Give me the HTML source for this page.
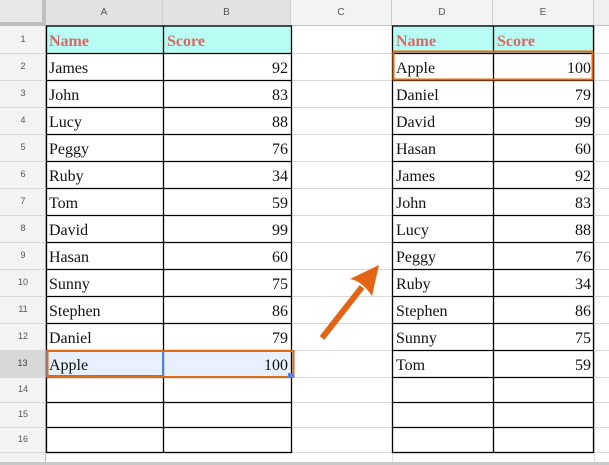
<!DOCTYPE html>
<html><head><style>
body{margin:0;width:609px;height:465px;overflow:hidden;background:#fff;position:relative;font-family:"Liberation Serif",serif;}
.c{position:absolute;box-sizing:border-box;}
.h{background:#f3f3f3;font-family:"Liberation Sans",sans-serif;font-size:10px;color:#555;text-align:center;}
</style></head><body>
<div class="c h" style="left:0;top:0;width:46px;height:26px;background:#e8e8e8;border-right:4px solid #c0c0c0;border-bottom:4px solid #c0c0c0"></div>
<div class="c h" style="left:46px;top:0;width:563px;height:26px;border-bottom:1px solid #c0c0c0;background:#efefef"></div>
<div class="c h" style="left:46px;top:0;width:117px;height:25px;line-height:25px;background:#e2e2e2;border-right:1px solid #ccc">A</div>
<div class="c h" style="left:163px;top:0;width:128px;height:25px;line-height:25px;background:#e2e2e2;border-right:1px solid #ccc">B</div>
<div class="c h" style="left:291px;top:0;width:101px;height:25px;line-height:25px;border-right:1px solid #ccc">C</div>
<div class="c h" style="left:392px;top:0;width:101px;height:25px;line-height:25px;border-right:1px solid #ccc">D</div>
<div class="c h" style="left:493px;top:0;width:101px;height:25px;line-height:25px;border-right:1px solid #ccc">E</div>
<div class="c h" style="left:0;top:26px;width:46px;height:437px;border-right:1px solid #c0c0c0"></div>
<svg class="c" style="left:0;top:0" width="609" height="465">
<g stroke="#d9d9d9" stroke-width="1">
<line x1="0" y1="53.5" x2="609" y2="53.5"/><line x1="0" y1="80.5" x2="609" y2="80.5"/><line x1="0" y1="107.5" x2="609" y2="107.5"/><line x1="0" y1="134.5" x2="609" y2="134.5"/><line x1="0" y1="161.5" x2="609" y2="161.5"/><line x1="0" y1="188.5" x2="609" y2="188.5"/><line x1="0" y1="215.5" x2="609" y2="215.5"/><line x1="0" y1="242.5" x2="609" y2="242.5"/><line x1="0" y1="269.5" x2="609" y2="269.5"/><line x1="0" y1="296.5" x2="609" y2="296.5"/><line x1="0" y1="323.5" x2="609" y2="323.5"/><line x1="0" y1="350.5" x2="609" y2="350.5"/><line x1="0" y1="377.5" x2="609" y2="377.5"/><line x1="0" y1="402.5" x2="609" y2="402.5"/><line x1="0" y1="427.5" x2="609" y2="427.5"/><line x1="0" y1="452.5" x2="609" y2="452.5"/>
<line x1="392.5" y1="26" x2="392.5" y2="463"/><line x1="594.5" y1="26" x2="594.5" y2="463"/>
</g>
<rect x="46" y="26" width="245" height="27" fill="#b7fdf4"/>
<rect x="392" y="26" width="202" height="27" fill="#b7fdf4"/>
<rect x="46" y="350" width="245" height="27" fill="#e8f0fd"/>
<g stroke="#000" stroke-width="1.3" fill="none">
<rect x="46.5" y="26" width="245" height="426.5"/>
<line x1="163.5" y1="26" x2="163.5" y2="452"/>
<line x1="46" y1="53.5" x2="291" y2="53.5"/><line x1="46" y1="80.5" x2="291" y2="80.5"/><line x1="46" y1="107.5" x2="291" y2="107.5"/><line x1="46" y1="134.5" x2="291" y2="134.5"/><line x1="46" y1="161.5" x2="291" y2="161.5"/><line x1="46" y1="188.5" x2="291" y2="188.5"/><line x1="46" y1="215.5" x2="291" y2="215.5"/><line x1="46" y1="242.5" x2="291" y2="242.5"/><line x1="46" y1="269.5" x2="291" y2="269.5"/><line x1="46" y1="296.5" x2="291" y2="296.5"/><line x1="46" y1="323.5" x2="291" y2="323.5"/><line x1="46" y1="350.5" x2="291" y2="350.5"/><line x1="46" y1="377.5" x2="291" y2="377.5"/><line x1="46" y1="402.5" x2="291" y2="402.5"/><line x1="46" y1="427.5" x2="291" y2="427.5"/>
<rect x="392.5" y="26" width="201" height="426.5"/>
<line x1="493.5" y1="26" x2="493.5" y2="452"/>
<line x1="392" y1="53.5" x2="594" y2="53.5"/><line x1="392" y1="80.5" x2="594" y2="80.5"/><line x1="392" y1="107.5" x2="594" y2="107.5"/><line x1="392" y1="134.5" x2="594" y2="134.5"/><line x1="392" y1="161.5" x2="594" y2="161.5"/><line x1="392" y1="188.5" x2="594" y2="188.5"/><line x1="392" y1="215.5" x2="594" y2="215.5"/><line x1="392" y1="242.5" x2="594" y2="242.5"/><line x1="392" y1="269.5" x2="594" y2="269.5"/><line x1="392" y1="296.5" x2="594" y2="296.5"/><line x1="392" y1="323.5" x2="594" y2="323.5"/><line x1="392" y1="350.5" x2="594" y2="350.5"/><line x1="392" y1="377.5" x2="594" y2="377.5"/><line x1="392" y1="402.5" x2="594" y2="402.5"/><line x1="392" y1="427.5" x2="594" y2="427.5"/>
</g>
<rect x="47" y="351" width="116" height="25" fill="none" stroke="#4a86e8" stroke-width="2"/>
<rect x="47.5" y="351" width="246" height="26" fill="none" stroke="#e06a10" stroke-width="2"/>
<rect x="288" y="373" width="5" height="5" fill="#4a86e8"/>
<rect x="393.5" y="51.5" width="199" height="28" fill="none" stroke="#e06a10" stroke-width="2"/>
<line x1="322" y1="338" x2="362" y2="287" stroke="#e36414" stroke-width="6"/>
<path d="M379,265 L350,279 Q362,281 372,296 Z" fill="#e36414"/>
<rect x="0" y="462" width="609" height="3" fill="#c8c8c8"/>
</svg>
<div style="position:absolute;left:0;top:26px;width:46px;font-family:'Liberation Sans',sans-serif;font-size:9px;color:#555;text-align:center;line-height:27px">1<br>2<br>3<br>4<br>5<br>6<br>7<br>8<br>9<br>10<br>11<br>12<br>13</div>
<div style="position:absolute;left:0;top:377px;width:46px;font-family:'Liberation Sans',sans-serif;font-size:9px;color:#555;text-align:center;line-height:25px">14<br>15<br>16</div>
<div class="c" style="left:0;top:350px;width:45px;height:27px;background:#d8d8d8;font-family:'Liberation Sans',sans-serif;font-size:9px;color:#444;text-align:center;line-height:27px">13</div>
<div style="position:absolute;left:49px;top:28px;font-size:16px;line-height:27px;color:#111">
<b style="color:#e06666">Name</b><br>James<br>John<br>Lucy<br>Peggy<br>Ruby<br>Tom<br>David<br>Hasan<br>Sunny<br>Stephen<br>Daniel<br>Apple</div>
<div style="position:absolute;left:167px;top:28px;font-size:16px;line-height:27px;color:#e06666"><b>Score</b></div>
<div style="position:absolute;left:163px;width:125px;top:55px;font-size:16px;line-height:27px;color:#111;text-align:right">92<br>83<br>88<br>76<br>34<br>59<br>99<br>60<br>75<br>86<br>79<br>100</div>
<div style="position:absolute;left:396px;top:28px;font-size:16px;line-height:27px;color:#111">
<b style="color:#e06666">Name</b><br>Apple<br>Daniel<br>David<br>Hasan<br>James<br>John<br>Lucy<br>Peggy<br>Ruby<br>Stephen<br>Sunny<br>Tom</div>
<div style="position:absolute;left:497px;top:28px;font-size:16px;line-height:27px;color:#e06666"><b>Score</b></div>
<div style="position:absolute;left:493px;width:98px;top:55px;font-size:16px;line-height:27px;color:#111;text-align:right">100<br>79<br>99<br>60<br>92<br>83<br>88<br>76<br>34<br>86<br>75<br>59</div>
</body></html>
